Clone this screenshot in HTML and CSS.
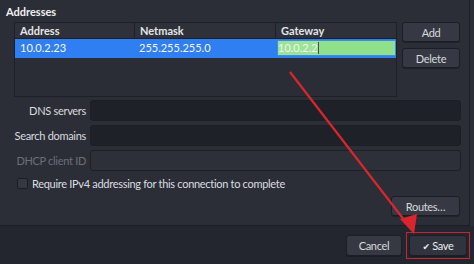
FILE: index.html
```html
<!DOCTYPE html>
<html lang="en">

<head>
    <meta charset="UTF-8">
    <meta name="viewport" content="width=device-width, initial-scale=1.0">
    <title>IPv4 Settings</title>
    <link rel="stylesheet" href="styles.css">
</head>

<body>
    <section class="panel">
        <h2 class="title">Addresses</h2>
        <div class="addr">
            <div class="tree">
                <div class="tree-row tree-head">
                    <span class="col col-addr">Address</span>
                    <span class="col col-mask">Netmask</span>
                    <span class="col col-gw">Gateway</span>
                </div>
                <div class="tree-row tree-sel">
                    <span class="col col-addr">10.0.2.23</span>
                    <span class="col col-mask">255.255.255.0</span>
                    <span class="col col-gw"><span class="edit"><span class="edit-text">10.0.2.2</span><span class="caret"></span></span></span>
                </div>
            </div>
            <div class="side">
                <button class="btn">Add</button>
                <button class="btn">Delete</button>
            </div>
        </div>
        <div class="form">
            <label class="lbl">DNS servers</label>
            <div class="entry"></div>
            <label class="lbl">Search domains</label>
            <div class="entry"></div>
            <label class="lbl lbl-off">DHCP client ID</label>
            <div class="entry entry-off"></div>
        </div>
        <div class="check">
            <span class="box"></span>
            <span>Require IPv4 addressing for this connection to complete</span>
        </div>
        <div class="routes">
            <button class="btn btn-routes">Routes…</button>
        </div>
    </section>
    <footer class="footer">
        <button class="btn btn-foot">Cancel</button>
        <span class="mark">
            <button class="btn btn-foot btn-save"><span class="tick">&#10004;</span> Save</button>
        </span>
    </footer>

    <svg class="arrow" width="474" height="264" viewBox="0 0 474 264">
        <line x1="290" y1="72" x2="408" y2="225" stroke="#d8262e" stroke-width="2.2" />
        <polygon points="414,234 400,219 417,214" fill="#d8262e" />
    </svg>
</body>

</html>
```

FILE: styles.css
```css
html {
    box-sizing: border-box;
    font-family: Lato, "Noto Sans", sans-serif;
    font-size: 11px;
    letter-spacing: -0.3px;
}

*,
*::before,
*::after {
    box-sizing: inherit;
}

body {
    margin: 0;
    width: 474px;
    height: 264px;
    overflow: hidden;
    background-color: #2b2e37;
    color: #dcdde0;
    position: relative;
}

button {
    font-family: inherit;
    font-size: 11px;
    letter-spacing: inherit;
}

.panel {
    width: 470px;
    height: 226px;
    border-right: 1px solid #1d1f25;
    border-bottom: 1px solid #1b1d23;
    padding-top: 4px;
}

.title {
    margin: 0 0 0 6px;
    height: 18px;
    line-height: 16px;
    font-size: 11px;
    font-weight: bold;
    letter-spacing: 0;
    color: #f0f0f2;
}

.addr {
    display: flex;
    gap: 5px;
    margin-left: 14px;
}

.tree {
    width: 383px;
    height: 75px;
    border: 1px solid #1e2026;
    background-color: #2a2d36;
}

.tree-row {
    display: flex;
}

.tree-head {
    height: 16px;
    background-color: #2e313a;
    border-bottom: 1px solid #1e2026;
    font-weight: bold;
    letter-spacing: 0;
    color: #e4e5e8;
    line-height: 15px;
}

.tree-sel {
    height: 19px;
    background-color: #2f7ff2;
    color: #f4f6fa;
    line-height: 18px;
    letter-spacing: 0;
}

.col {
    padding-left: 5px;
}

.col-addr {
    width: 119px;
}

.col-mask {
    width: 141px;
}

.col-gw {
    width: 121px;
    padding-left: 2px;
    padding-top: 1px;
}

.tree-head .col-mask,
.tree-head .col-gw {
    border-left: 1px solid #1e2026;
}

.tree-head .col-gw {
    padding-left: 5px;
    padding-top: 0;
}

.edit {
    display: flex;
    align-items: center;
    height: 16px;
    width: 119px;
    background-color: #8fe08a;
    border: 1px solid #3b8cf0;
    color: #eef7ea;
    line-height: 14px;
}

.edit-text {
    background-color: rgba(255, 255, 255, .12);
}

.caret {
    width: 1px;
    height: 12px;
    background-color: #4a4f57;
}

.side {
    display: flex;
    flex-direction: column;
    gap: 6px;
}

.btn {
    width: 58px;
    height: 20px;
    padding: 0;
    border: 1px solid #1c1e24;
    border-radius: 3px;
    background-color: #363943;
    color: #d8d9dc;
    box-shadow: 0 1px 0 rgba(0, 0, 0, .25);
}

.form {
    display: grid;
    grid-template-columns: 86px 371px;
    column-gap: 4px;
    row-gap: 4px;
    margin-top: 3px;
}

.lbl {
    text-align: right;
    line-height: 21px;
    color: #dadbde;
}

.lbl-off {
    color: #6c6f77;
}

.entry {
    height: 21px;
    border: 1px solid #1d1f25;
    border-radius: 3px;
    background-color: #1f2128;
}

.entry-off {
    background-color: #2d3039;
}

.check {
    display: flex;
    align-items: center;
    gap: 4px;
    margin: 5px 0 0 17px;
    height: 14px;
}

.box {
    width: 11px;
    height: 11px;
    border: 1px solid #1b1d23;
    border-radius: 2px;
    background-color: #353842;
}

.routes {
    display: flex;
    justify-content: flex-end;
    padding-right: 9px;
    margin-top: 6px;
}

.btn-routes {
    width: 69px;
}

.footer {
    height: 38px;
    background-color: #23262e;
    display: flex;
    justify-content: flex-end;
    align-items: center;
    gap: 4px;
    padding-right: 4px;
}

.btn-foot {
    height: 21px;
    width: 56px;
}

.mark {
    display: flex;
    padding: 2px;
    border: 1px solid #c4262c;
}

.btn-save {
    width: 58px;
    background-color: #30343e;
    color: #eceef0;
}

.tick {
    font-family: "DejaVu Sans", sans-serif;
    font-size: 9px;
}

.arrow {
    position: absolute;
    left: 0;
    top: 0;
    pointer-events: none;
}
```
